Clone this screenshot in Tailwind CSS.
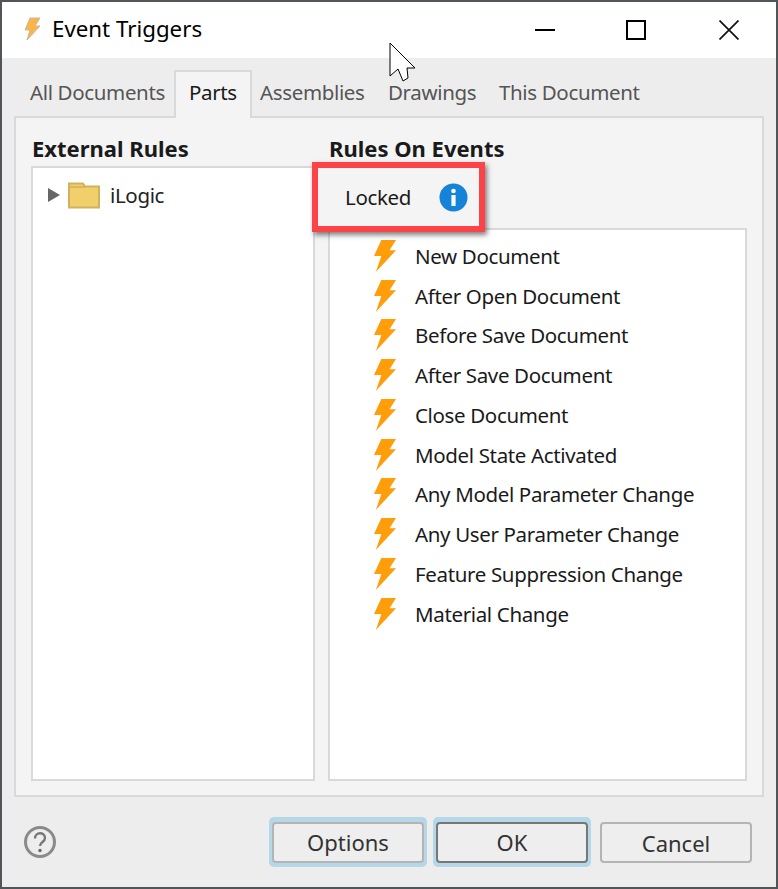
<!DOCTYPE html>
<html lang="en">
<head>
<meta charset="UTF-8">
<title>Event Triggers</title>
<script src="https://cdn.jsdelivr.net/npm/@tailwindcss/browser@4"></script>
</head>
<body class="m-0 bg-[#ededed]">
<div class="relative w-[778px] h-[889px] overflow-hidden flex flex-col border-2 border-[#50555a] bg-[#ededed] font-['Noto_Sans',sans-serif] text-[22px] leading-[30px] text-[#1a1a1a]">

  <!-- title bar -->
  <div class="h-[56px] shrink-0 bg-white flex items-center">
    <svg class="ml-[21px] w-[18px] h-[24px] mb-[3px]" viewBox="0 0 18 24"><path d="M7 1h10l-5 8h5L4 23l3-10H2z" fill="#f9b548" stroke="#c9b99a" stroke-width="1"/></svg>
    <span class="ml-[11px] text-black mb-[2px] text-[22.3px]">Event Triggers</span>
    <div class="ml-auto flex items-center">
      <svg class="w-[20px] h-[20px] mr-[71px]" viewBox="0 0 20 20"><path d="M0 10h20" stroke="#000" stroke-width="2"/></svg>
      <svg class="w-[20px] h-[20px] mr-[73px]" viewBox="0 0 20 20"><path d="M1 1h18v18H1z" fill="none" stroke="#000" stroke-width="2"/></svg>
      <svg class="w-[20px] h-[20px] mr-[37px]" viewBox="0 0 20 20"><path d="M0.5 0.5l19 19M19.5 0.5l-19 19" stroke="#111" stroke-width="1.7"/></svg>
    </div>
  </div>

  <!-- tabs -->
  <div class="h-[58px] shrink-0 pl-[12px] pt-[12px] flex items-start whitespace-nowrap text-[20.5px] tracking-[-0.35px] text-[#555]">
    <div class="pl-[16px] w-[160px] pt-[7px]">All Documents</div>
    <div class="relative z-10 w-[78px] h-[48px] border-2 border-b-0 border-[#d9d9d9] bg-[#f4f4f4] text-[#1a1a1a] pl-[13px] pt-[5px]">Parts</div>
    <div class="pl-[8px] w-[136px] pt-[7px]">Assemblies</div>
    <div class="w-[111px] pt-[7px]">Drawings</div>
    <div class="pt-[7px]">This Document</div>
  </div>

  <!-- panel -->
  <div class="mx-[12px] h-[681px] shrink-0 border-2 border-[#d9d9d9] bg-[#f4f4f4] flex pl-[15px] pr-[15px] pb-[14px] pt-[15px]">
    <div class="w-[284px] shrink-0 flex flex-col">
      <div class="font-bold h-[33px] pl-[1px]">External Rules</div>
      <div class="flex-1 border-2 border-[#d9d9d9] bg-white pl-[15px] pt-[12px] text-[20.5px] tracking-[-0.35px]">
        <div class="flex items-center h-[30px]">
          <svg class="w-[12px] h-[14px]" viewBox="0 0 12 14"><path d="M0 0l12 7L0 14z" fill="#666"/></svg>
          <svg class="ml-[8px] w-[32px] h-[28px]" viewBox="0 0 32 28"><path d="M1 2.5h14l2 3h14v21H1z" fill="#f1d06b" stroke="#d0b25c" stroke-width="2"/><path d="M1 6h16" stroke="#d0b25c" stroke-width="1.5"/></svg>
          <span class="ml-[10px] text-[#222]">iLogic</span>
        </div>
      </div>
    </div>
    <div class="ml-[13px] flex-1 flex flex-col">
      <div class="font-bold h-[33px] pl-[1px]">Rules On Events</div>
      <div class="h-[62px]"></div>
      <div class="flex-1 border-2 border-[#d9d9d9] bg-white pl-[44px] pt-[6px] text-[20.5px] tracking-[-0.35px]">
        <div class="flex items-center h-[39.75px]"><svg class="w-[22px] h-[32px]" viewBox="0 0 24 34" preserveAspectRatio="none"><path d="M8 0h16l-7 11h7L2 34l6-17H0z" fill="#ff9d0a"/></svg><span class="ml-[19px]">New Document</span></div>
        <div class="flex items-center h-[39.75px]"><svg class="w-[22px] h-[32px]" viewBox="0 0 24 34" preserveAspectRatio="none"><path d="M8 0h16l-7 11h7L2 34l6-17H0z" fill="#ff9d0a"/></svg><span class="ml-[19px]">After Open Document</span></div>
        <div class="flex items-center h-[39.75px]"><svg class="w-[22px] h-[32px]" viewBox="0 0 24 34" preserveAspectRatio="none"><path d="M8 0h16l-7 11h7L2 34l6-17H0z" fill="#ff9d0a"/></svg><span class="ml-[19px]">Before Save Document</span></div>
        <div class="flex items-center h-[39.75px]"><svg class="w-[22px] h-[32px]" viewBox="0 0 24 34" preserveAspectRatio="none"><path d="M8 0h16l-7 11h7L2 34l6-17H0z" fill="#ff9d0a"/></svg><span class="ml-[19px]">After Save Document</span></div>
        <div class="flex items-center h-[39.75px]"><svg class="w-[22px] h-[32px]" viewBox="0 0 24 34" preserveAspectRatio="none"><path d="M8 0h16l-7 11h7L2 34l6-17H0z" fill="#ff9d0a"/></svg><span class="ml-[19px]">Close Document</span></div>
        <div class="flex items-center h-[39.75px]"><svg class="w-[22px] h-[32px]" viewBox="0 0 24 34" preserveAspectRatio="none"><path d="M8 0h16l-7 11h7L2 34l6-17H0z" fill="#ff9d0a"/></svg><span class="ml-[19px]">Model State Activated</span></div>
        <div class="flex items-center h-[39.75px]"><svg class="w-[22px] h-[32px]" viewBox="0 0 24 34" preserveAspectRatio="none"><path d="M8 0h16l-7 11h7L2 34l6-17H0z" fill="#ff9d0a"/></svg><span class="ml-[19px]">Any Model Parameter Change</span></div>
        <div class="flex items-center h-[39.75px]"><svg class="w-[22px] h-[32px]" viewBox="0 0 24 34" preserveAspectRatio="none"><path d="M8 0h16l-7 11h7L2 34l6-17H0z" fill="#ff9d0a"/></svg><span class="ml-[19px]">Any User Parameter Change</span></div>
        <div class="flex items-center h-[39.75px]"><svg class="w-[22px] h-[32px]" viewBox="0 0 24 34" preserveAspectRatio="none"><path d="M8 0h16l-7 11h7L2 34l6-17H0z" fill="#ff9d0a"/></svg><span class="ml-[19px]">Feature Suppression Change</span></div>
        <div class="flex items-center h-[39.75px]"><svg class="w-[22px] h-[32px]" viewBox="0 0 24 34" preserveAspectRatio="none"><path d="M8 0h16l-7 11h7L2 34l6-17H0z" fill="#ff9d0a"/></svg><span class="ml-[19px]">Material Change</span></div>
      </div>
    </div>
  </div>

  <!-- footer -->
  <div class="flex-1 flex items-start pl-[22px] pr-[24px] pt-[20px]">
    <svg class="w-[32px] h-[32px] mt-[9px]" viewBox="0 0 32 32"><circle cx="16" cy="16" r="14.5" fill="none" stroke="#8a8a8a" stroke-width="3"/><path d="M11 12.5c0-7 10-7 10-.5 0 4-5 4-5 8" fill="none" stroke="#777" stroke-width="2.4"/><circle cx="16" cy="24.5" r="1.7" fill="#666"/></svg>
    <div class="ml-auto flex">
      <div class="w-[158px] h-[50px] rounded-[5px] bg-[#b5d7e8] flex items-center justify-center">
        <div class="w-[152px] h-[41px] rounded-[4px] border-2 border-[#b4b4b4] bg-[#eeeeee] text-[#333] flex items-center justify-center">Options</div>
      </div>
      <div class="ml-[6px] w-[158px] h-[50px] rounded-[5px] bg-[#b5d7e8] flex items-center justify-center">
        <div class="w-[152px] h-[41px] rounded-[4px] border-2 border-[#777] bg-[#eeeeee] text-[#333] flex items-center justify-center">OK</div>
      </div>
      <div class="ml-[9px] mt-[5px] w-[152px] h-[41px] rounded-[4px] border-2 border-[#b4b4b4] bg-[#eeeeee] text-[#333] flex items-center justify-center">Cancel</div>
    </div>
  </div>

  <!-- annotation box drawn over the dialog -->
  <div class="absolute left-[310px] top-[160px] w-[173px] h-[70px] border-[6px] border-[#fb4348] bg-[#f4f4f4] shadow-[2px_3px_5px_rgba(0,0,0,0.5)] flex items-center pl-[27px] text-[20.5px] tracking-[-0.35px]">
    <span>Locked</span>
    <svg class="ml-[28px] w-[29px] h-[29px]" viewBox="0 0 29 29"><circle cx="14.5" cy="14.5" r="14" fill="#1584d8"/><circle cx="14.5" cy="8" r="2.3" fill="#fff"/><path d="M12.4 12h4.2v11h-4.2z" fill="#fff"/></svg>
  </div>

  <!-- mouse cursor -->
  <svg class="absolute left-[387px] top-[40px] w-[28px] h-[40px]" viewBox="0 0 28 40"><path d="M1 1L26 26H18L19 36L14 39L9 27L1 34z" fill="#fff" stroke="#000" stroke-width="1"/></svg>
</div>
</body>
</html>
